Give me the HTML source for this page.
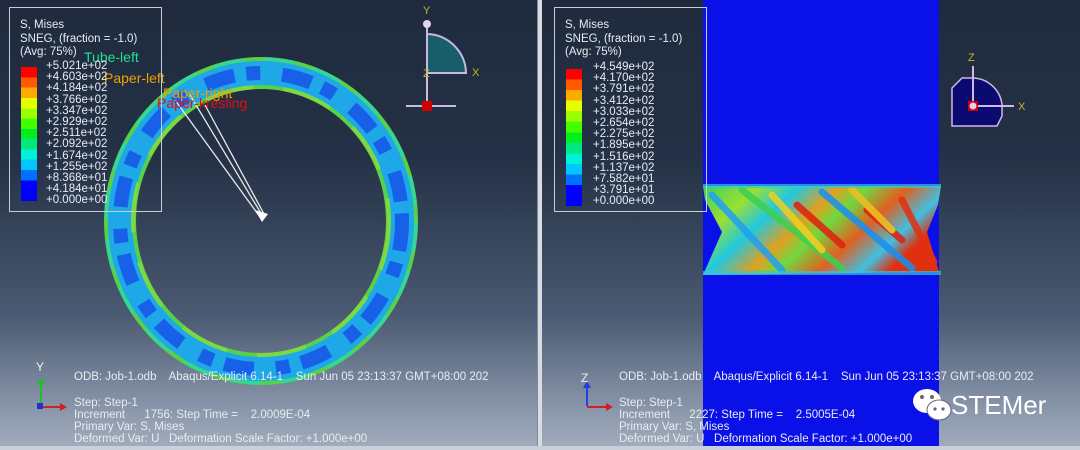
<!DOCTYPE html>
<html><head><meta charset="utf-8"><style>
body{margin:0;width:1080px;height:450px;overflow:hidden;position:relative;font-family:"Liberation Sans",sans-serif;}
.pane{position:absolute;top:0;height:450px;background:linear-gradient(#1f2a3d 0%,#243146 35%,#4a5a72 70%,#8d99ad 92%,#a3adbd 100%);}
.t{position:absolute;color:#e8ecf2;font-size:11.5px;line-height:13px;white-space:pre;}
.leg{position:absolute;border:1px solid #c8ccd4;}
.bar{position:absolute;width:16px;}
.lab{position:absolute;font-size:11.5px;color:#e8ecf2;line-height:11.2px;white-space:pre;}
</style></head><body>
<div class="pane" style="left:0;width:537px"></div>
<div style="position:absolute;left:537px;top:0;width:5px;height:450px;background:#d8dde5;border-left:1px solid #888;border-right:1px solid #555"></div>
<div class="pane" style="left:542px;width:538px"></div>
<div style="position:absolute;left:0;top:446px;width:1080px;height:4px;background:#c9d0da"></div>

<!-- left ring -->
<svg style="position:absolute;left:0;top:0" width="537" height="450">
<ellipse cx="261" cy="221" rx="141" ry="148" fill="none" stroke="#58d048" stroke-width="32"/>
<ellipse cx="261" cy="221" rx="141" ry="148" fill="none" stroke="#1ea8e8" stroke-width="24"/>
<ellipse cx="261" cy="221" rx="141" ry="148" fill="none" stroke="#1860e8" stroke-width="14" stroke-dasharray="30 12 14 22"/>
<ellipse cx="261" cy="221" rx="128" ry="134" fill="none" stroke="#80d840" stroke-width="4" stroke-dasharray="50 30"/>
<ellipse cx="261" cy="221" rx="155" ry="162" fill="none" stroke="#2fd8a0" stroke-width="3" stroke-dasharray="30 20"/>
<g stroke="#e8e8e8" stroke-width="1.3">
<line x1="190" y1="95" x2="262" y2="215"/><line x1="175" y1="100" x2="260" y2="217"/><line x1="205" y1="105" x2="264" y2="214"/></g>
<polygon points="255,210 268,214 262,222" fill="#fff"/>
<path d="M427 34 A40 40 0 0 1 466 73 L427 73 Z" fill="#1a5d6a" stroke="#c9b8e0" stroke-width="2"/>
<line x1="427" y1="24" x2="427" y2="106" stroke="#c9b8e0" stroke-width="2"/>
<line x1="406" y1="106" x2="456" y2="106" stroke="#c9b8e0" stroke-width="2"/>
<circle cx="427" cy="24" r="4" fill="#e0d4f4"/>
<rect x="422" y="101" width="10" height="10" fill="#d00000"/>
<text x="423" y="14" fill="#c8b820" font-size="11" font-family="Liberation Sans">Y</text>
<text x="472" y="76" fill="#c8b820" font-size="11" font-family="Liberation Sans">X</text>
<text x="423" y="77" fill="#c8b820" font-size="11" font-family="Liberation Sans">Z</text>
<line x1="41" y1="405" x2="41" y2="383" stroke="#20c020" stroke-width="2"/><polygon points="37,385 45,385 41,378" fill="#20c020"/>
<line x1="41" y1="407" x2="62" y2="407" stroke="#d02020" stroke-width="2"/><polygon points="60,403 60,411 67,407" fill="#d02020"/>
<rect x="37" y="403" width="6" height="6" fill="#2030d0"/>
<text x="36" y="371" fill="#eee" font-size="12" font-family="Liberation Sans">Y</text>
</svg>

<div class="t" style="left:84px;top:51px;color:#20e090;font-size:14px">Tube-left</div>
<div class="t" style="left:104px;top:72px;color:#f0a000;font-size:14px">Paper-left</div>
<div class="t" style="left:163px;top:87px;color:#f0a000;font-size:14px">Paper-right</div>
<div class="t" style="left:157px;top:97px;color:#e01010;font-size:14px">Paper-kresling</div>

<div class="leg" style="left:9px;top:7px;width:151px;height:203px"></div>
<div class="t" style="left:20px;top:19px;line-height:13.5px">S, Mises
SNEG, (fraction = -1.0)
(Avg: 75%)</div>
<div class="bar" style="left:21px;top:67px;height:134px;background:linear-gradient(#ff0000 0 7.7%,#ff5a00 0 15.4%,#ffaa00 0 23.1%,#e6ff00 0 30.8%,#9cff00 0 38.5%,#40ff00 0 46.2%,#00ee20 0 53.8%,#00e880 0 61.5%,#00f0d8 0 69.2%,#00c8ff 0 76.9%,#0070ff 0 84.6%,#0000ff 0 100%)"></div>
<div class="lab" style="left:46px;top:61px">+5.021e+02
+4.603e+02
+4.184e+02
+3.766e+02
+3.347e+02
+2.929e+02
+2.511e+02
+2.092e+02
+1.674e+02
+1.255e+02
+8.368e+01
+4.184e+01
+0.000e+00</div>

<div class="t" style="left:74px;top:371px">ODB: Job-1.odb    Abaqus/Explicit 6.14-1    Sun Jun 05 23:13:37 GMT+08:00 202</div>
<div class="t" style="left:74px;top:397px;line-height:12px">Step: Step-1
Increment      1756: Step Time =    2.0009E-04
Primary Var: S, Mises
Deformed Var: U   Deformation Scale Factor: +1.000e+00</div>

<!-- right -->
<div style="position:absolute;left:703px;top:0;width:236px;height:446px;background:#0a10e8"></div>
<svg style="position:absolute;left:542px;top:0" width="538" height="450">
<defs><linearGradient id="g" x1="0" y1="0" x2="1" y2="0.4">
<stop offset="0" stop-color="#38d060"/><stop offset="0.2" stop-color="#9ce030"/><stop offset="0.35" stop-color="#20c8e0"/><stop offset="0.5" stop-color="#e0a020"/><stop offset="0.6" stop-color="#70d840"/><stop offset="0.75" stop-color="#e06020"/><stop offset="0.9" stop-color="#40c0e0"/><stop offset="1" stop-color="#e03010"/></linearGradient></defs>
<polygon points="161,186 399,186 396,205 385,232 397,272 161,275 180,232 163,200" fill="url(#g)"/>
<g stroke-width="7" stroke-linecap="round" fill="none" opacity="0.85">
<path d="M170 195 L240 270" stroke="#20a0f0"/><path d="M200 190 L300 268" stroke="#3cd050"/>
<path d="M255 205 L300 245" stroke="#e02010"/><path d="M325 210 L360 240" stroke="#e02010"/>
<path d="M280 192 L370 268" stroke="#1890f0"/><path d="M360 200 L392 262" stroke="#e03010"/>
<path d="M230 195 L280 250" stroke="#f0d020"/><path d="M310 190 L350 230" stroke="#f0c020"/></g>
<rect x="161" y="184" width="238" height="4" fill="#30c8e0" opacity="0.7"/>
<rect x="161" y="271" width="238" height="4" fill="#30c8e0" opacity="0.7"/>
<path d="M410 88 L410 126 L455 126 L460 116 L460 105 A30 30 0 0 0 430 78 L420 78 Z" fill="#0a0a70" stroke="#d0b8e8" stroke-width="1.5"/>
<line x1="431" y1="66" x2="431" y2="106" stroke="#d0b8e8" stroke-width="2"/>
<line x1="431" y1="106" x2="472" y2="106" stroke="#d0b8e8" stroke-width="2"/>
<rect x="426" y="101" width="10" height="10" fill="#d00000"/><circle cx="431" cy="106" r="3.5" fill="#e0d4f4"/>
<text x="426" y="61" fill="#c8b820" font-size="11" font-family="Liberation Sans">Z</text>
<text x="476" y="110" fill="#c8b820" font-size="11" font-family="Liberation Sans">X</text>
<line x1="45" y1="406" x2="45" y2="386" stroke="#2040e0" stroke-width="2"/><polygon points="41,388 49,388 45,381" fill="#2040e0"/>
<line x1="45" y1="407" x2="66" y2="407" stroke="#d02020" stroke-width="2"/><polygon points="64,403 64,411 71,407" fill="#d02020"/>
<text x="39" y="382" fill="#eee" font-size="12" font-family="Liberation Sans">Z</text>
<ellipse cx="385" cy="401" rx="14" ry="12" fill="#fff"/><ellipse cx="397" cy="410" rx="12" ry="10" fill="#fff" stroke="#5a6a80" stroke-width="1"/>
<circle cx="380" cy="397" r="2" fill="#667"/><circle cx="390" cy="397" r="2" fill="#667"/>
<circle cx="393" cy="409" r="1.6" fill="#667"/><circle cx="401" cy="409" r="1.6" fill="#667"/>
</svg>
<div class="t" style="left:951px;top:391px;font-size:26px;line-height:28px;color:#fff">STEMer</div>

<div class="leg" style="left:554px;top:7px;width:151px;height:203px"></div>
<div class="t" style="left:565px;top:19px;line-height:13.5px">S, Mises
SNEG, (fraction = -1.0)
(Avg: 75%)</div>
<div class="bar" style="left:566px;top:69px;height:137px;background:linear-gradient(#ff0000 0 7.7%,#ff5a00 0 15.4%,#ffaa00 0 23.1%,#e6ff00 0 30.8%,#9cff00 0 38.5%,#40ff00 0 46.2%,#00ee20 0 53.8%,#00e880 0 61.5%,#00f0d8 0 69.2%,#00c8ff 0 76.9%,#0070ff 0 84.6%,#0000ff 0 100%)"></div>
<div class="lab" style="left:593px;top:62px">+4.549e+02
+4.170e+02
+3.791e+02
+3.412e+02
+3.033e+02
+2.654e+02
+2.275e+02
+1.895e+02
+1.516e+02
+1.137e+02
+7.582e+01
+3.791e+01
+0.000e+00</div>

<div class="t" style="left:619px;top:371px">ODB: Job-1.odb    Abaqus/Explicit 6.14-1    Sun Jun 05 23:13:37 GMT+08:00 202</div>
<div class="t" style="left:619px;top:397px;line-height:12px">Step: Step-1
Increment      2227: Step Time =    2.5005E-04
Primary Var: S, Mises
Deformed Var: U   Deformation Scale Factor: +1.000e+00</div>
</body></html>
